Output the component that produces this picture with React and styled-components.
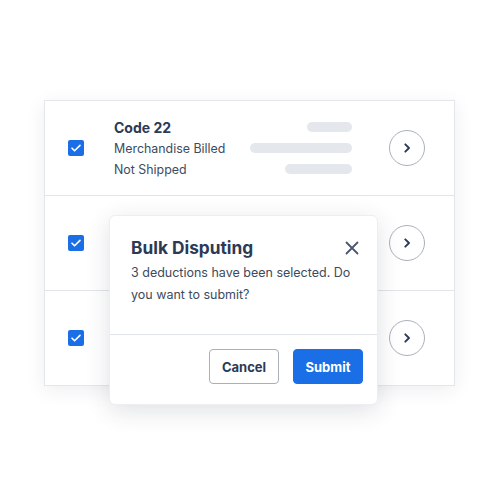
import styled, { createGlobalStyle } from "styled-components";

const GlobalStyle = createGlobalStyle`
  html, body {
    margin: 0;
    padding: 0;
    background: #fff;
    font-family: Inter, "Noto Sans", sans-serif;
  }
`;

const rows = [
  { code: "Code 22", lines: ["Merchandise Billed", "Not Shipped"] },
  { code: "Code 22", lines: ["Merchandise Billed", "Not Shipped"] },
  { code: "Code 22", lines: ["Merchandise Billed", "Not Shipped"] },
];

function Check() {
  return (
    <CheckBox>
      <svg width="12" height="12" viewBox="0 0 12 12">
        <path
          d="M2 6.2l2.6 2.6L10 3.4"
          fill="none"
          stroke="#fff"
          strokeWidth="1.6"
          strokeLinecap="round"
          strokeLinejoin="round"
        />
      </svg>
    </CheckBox>
  );
}

function App() {
  return (
    <Page>
      <GlobalStyle />
      <Stage>
        <Card>
          {rows.map((row, i) => (
            <Row key={i}>
              <Check />
              <Info>
                <Code>{row.code}</Code>
                {row.lines.map((l) => (
                  <Line key={l}>{l}</Line>
                ))}
              </Info>
              <Bars>
                <Bar $w={45} />
                <Bar $w={102} />
                <Bar $w={67} />
              </Bars>
              <Arrow>
                <svg width="12" height="12" viewBox="0 0 12 12">
                  <path
                    d="M4.3 2.3L8 6l-3.7 3.7"
                    fill="none"
                    stroke="#2b3a55"
                    strokeWidth="1.9"
                    strokeLinecap="round"
                    strokeLinejoin="round"
                  />
                </svg>
              </Arrow>
            </Row>
          ))}
        </Card>

        {/* dialog lies over the list */}
        <Modal>
          <ModalBody>
            <ModalHead>
              <Title>Bulk Disputing</Title>
              <Close aria-label="close">
                <svg width="14" height="14" viewBox="0 0 14 14">
                  <path
                    d="M1.5 1.5l11 11M12.5 1.5l-11 11"
                    stroke="#4a566b"
                    strokeWidth="1.8"
                    strokeLinecap="round"
                  />
                </svg>
              </Close>
            </ModalHead>
            <Message>
              3 deductions have been selected. Do you want to submit?
            </Message>
          </ModalBody>
          <Footer>
            <Button>Cancel</Button>
            <Button $primary>Submit</Button>
          </Footer>
        </Modal>
      </Stage>
    </Page>
  );
}

const Page = styled.div`
  width: 500px;
  height: 500px;
  padding: 100px 0 0 44px;
  box-sizing: border-box;
`;

const Stage = styled.div`
  position: relative;
  width: 411px;
`;

const Card = styled.div`
  background: #fff;
  border: 1px solid #e3e6ea;
  box-shadow: 0 4px 18px rgba(30, 40, 60, 0.08);
`;

const Row = styled.div`
  display: flex;
  align-items: center;
  height: 94px;
  padding: 0 29px 0 23px;
  & + & {
    border-top: 1px solid #e1e4e9;
  }
`;

const CheckBox = styled.div`
  width: 16px;
  height: 16px;
  border-radius: 2px;
  background: #1a6fe6;
  display: flex;
  align-items: center;
  justify-content: center;
  flex-shrink: 0;
`;

const Info = styled.div`
  flex: 1;
  margin-left: 30px;
  display: flex;
  flex-direction: column;
`;

const Code = styled.div`
  font-size: 14px;
  font-weight: 700;
  color: #2b3a55;
  line-height: 21px;
`;

const Line = styled.div`
  font-size: 12.4px;
  color: #3d4a60;
  line-height: 21px;
`;

const Bars = styled.div`
  display: flex;
  flex-direction: column;
  align-items: flex-end;
  gap: 11px;
`;

const Bar = styled.div`
  width: ${(p) => p.$w}px;
  height: 10px;
  border-radius: 5px;
  background: #e4e7eb;
`;

const Arrow = styled.div`
  width: 34px;
  height: 34px;
  margin-left: 37px;
  border: 1px solid #a9b0bc;
  border-radius: 50%;
  display: flex;
  align-items: center;
  justify-content: center;
`;

const Modal = styled.div`
  position: absolute;
  left: 65px;
  top: 115px;
  width: 269px;
  box-sizing: border-box;
  background: #fff;
  border-radius: 6px;
  border: 1px solid #eceef1;
  box-shadow: 0 6px 24px rgba(30, 40, 60, 0.14);
`;

const ModalBody = styled.div`
  padding: 20px 20px 28px 21px;
  border-bottom: 1px solid #e1e4e9;
`;

const ModalHead = styled.div`
  display: flex;
  align-items: center;
  justify-content: space-between;
  margin-bottom: 2px;
`;

const Title = styled.div`
  font-size: 17.3px;
  font-weight: 700;
  color: #2b3a55;
  line-height: 24px;
`;

const Close = styled.div`
  display: flex;
  margin-right: -2px;
`;

const Message = styled.div`
  font-size: 12.5px;
  color: #3d4a60;
  line-height: 22px;
`;

const Footer = styled.div`
  display: flex;
  justify-content: flex-end;
  gap: 14px;
  padding: 14px 14px 20px;
`;

const Button = styled.div`
  width: 70px;
  height: 35px;
  box-sizing: border-box;
  border-radius: 4px;
  display: flex;
  align-items: center;
  justify-content: center;
  font-size: 13px;
  font-weight: 700;
  color: ${(p) => (p.$primary ? "#fff" : "#2b3a55")};
  background: ${(p) => (p.$primary ? "#1a6fe6" : "#fff")};
  border: 1px solid ${(p) => (p.$primary ? "#1a6fe6" : "#a9b0bc")};
`;

export default App;
